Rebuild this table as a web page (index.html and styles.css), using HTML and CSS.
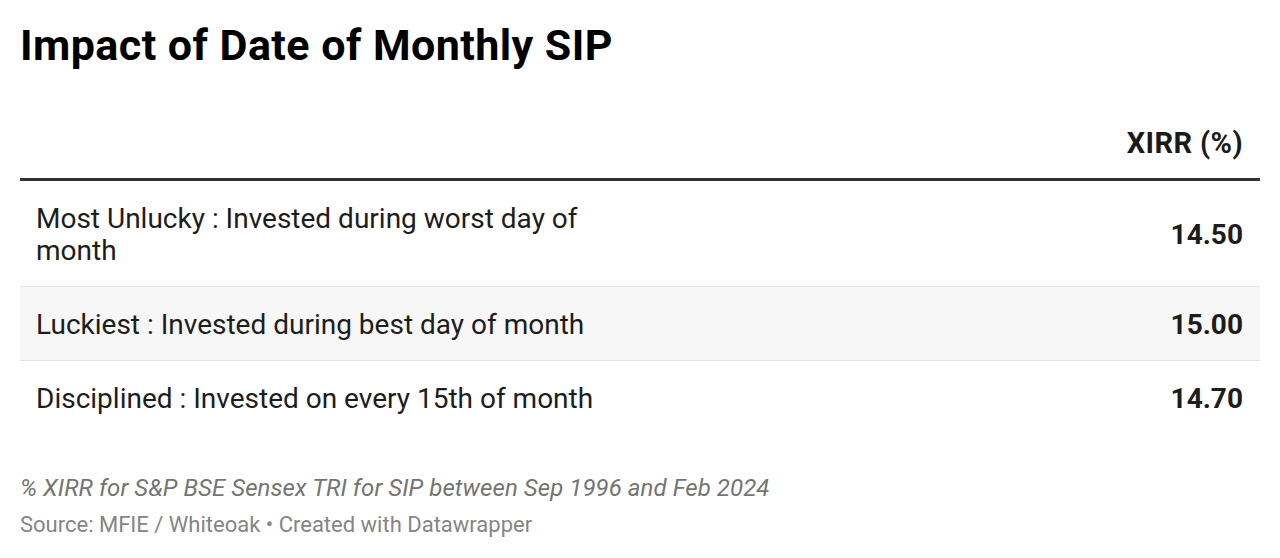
FILE: index.html
```html
<!DOCTYPE html>
<html>
<head>
<meta charset="utf-8">
<link rel="stylesheet" href="styles.css">
</head>
<body>
<div class="chart">
  <h1 class="title">Impact of Date of Monthly SIP</h1>
  <table class="tbl">
    <thead>
      <tr><th class="lbl"></th><th class="num">XIRR (%)</th></tr>
    </thead>
    <tbody>
      <tr><td class="lbl">Most Unlucky : Invested during worst day of month</td><td class="num">14.50</td></tr>
      <tr class="alt"><td class="lbl">Luckiest : Invested during best day of month</td><td class="num">15.00</td></tr>
      <tr><td class="lbl">Disciplined : Invested on every 15th of month</td><td class="num">14.70</td></tr>
    </tbody>
  </table>
  <div class="notes">% XIRR for S&amp;P BSE Sensex TRI for SIP between Sep 1996 and Feb 2024</div>
  <div class="source">Source: MFIE / Whiteoak • Created with Datawrapper</div>
</div>
</body>
</html>
```
FILE: styles.css
```css
html, body { margin: 0; padding: 0; background: #fff; }
body { font-family: Roboto, "Liberation Sans", sans-serif; color: #1d1d1d; }
.chart { padding: 20px 20px 0 20px; }
.title { margin: 0; font-size: 43px; letter-spacing: 0.45px; font-weight: 700; line-height: 50px; color: #000; }
.tbl { width: 100%; border-collapse: separate; border-spacing: 0; margin-top: 56px; }
.tbl th { font-size: 29px; letter-spacing: 0.4px; font-weight: 700; text-align: right; padding: 0 17px 18px 16px; border-bottom: 3px solid #333; line-height: 34px; color: #1a1a1a; }
.tbl td { font-size: 28px; padding: 22px 17px 19px 16px; line-height: 32px; vertical-align: middle; }
.tbl td.lbl { width: 580px; padding-right: 0; }
.tbl td.num { text-align: right; font-weight: 700; }
.tbl tr.alt td { background: #f7f7f7; border-top: 1px solid #e3e3e3; border-bottom: 1px solid #e3e3e3; }
.notes { margin-top: 39px; font-size: 24px; letter-spacing: 0.07px; font-style: italic; color: #747474; line-height: 30px; }
.source { margin-top: 8px; font-size: 22px; color: #858585; line-height: 28px; }
```
